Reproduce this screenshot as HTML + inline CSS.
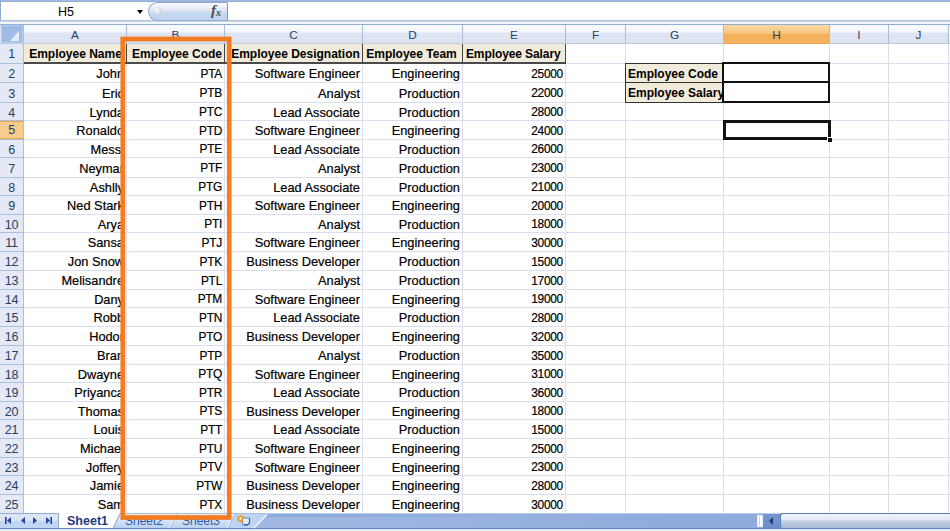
<!DOCTYPE html>
<html lang="en"><head><meta charset="utf-8"><title>Sheet1</title>
<style>
html,body{margin:0;padding:0}
body{width:950px;height:531px;overflow:hidden;background:#fff;position:relative;font-family:"Liberation Sans",sans-serif;font-size:12.5px;color:#000}
div,span{position:absolute;box-sizing:border-box;white-space:nowrap}
.hl{left:24px;width:926px;height:1px;background:#dadef0}
.vl{top:44px;width:1px;height:470px;background:#dadef0}
.ch{top:25px;height:18px;background:linear-gradient(#f8fafd 0,#f3f6fb 38%,#e0e5f3 46%,#dde2f1 100%);color:#27405e;text-align:center;line-height:21px;font-size:11.8px}
.chs{top:25px;height:19px;width:1px;background:#a9bcd9}
.rh{left:0;width:23px;background:#e5e8f5;color:#27405e;text-align:center;font-size:12.5px;letter-spacing:-0.3px}
.rhl{left:0;width:24px;height:1px;background:#a9bfdb}
.c{text-align:right;font-size:12.8px;-webkit-text-stroke:0.2px #000}
.n{font-size:11.9px;letter-spacing:-0.25px}
.b{font-weight:bold;font-size:12px;text-align:left;background:#f1ebdc}
.rsel{background:#f8cb8e;border:1px solid #f1a449;border-left:0;width:24px;line-height:17px !important}
.sel{background:linear-gradient(#f9d9a2 0,#f7c780 45%,#f3ad55 55%,#f4b566 100%)}

</style></head><body>
<div style="left:0;top:0;width:950px;height:25px;background:#fff"></div>
<div style="left:0;top:0;width:950px;height:2px;background:linear-gradient(#a9bfe0,#8eaad4)"></div>
<div style="left:0;top:0;width:1px;height:25px;background:#8eaad4"></div>
<div style="left:0;top:20px;width:950px;height:1px;background:#b3c2da"></div>
<div style="left:0;top:21px;width:950px;height:1px;background:#c9d5e8"></div>
<div style="left:0;top:22px;width:950px;height:2px;background:#f2f5fa"></div>
<div style="left:0;top:24px;width:950px;height:1px;background:#93acd5"></div>
<div style="left:1px;top:2px;width:130px;height:18px;line-height:21px;text-align:center;font-size:12.5px">H5</div>
<div style="left:136.5px;top:10px;width:0;height:0;border-left:3.5px solid transparent;border-right:3.5px solid transparent;border-top:4px solid #000"></div>
<div style="left:148px;top:2px;width:80px;height:19px;background:linear-gradient(#fbfcfe 0,#f1f4fa 18%,#dde3f3 45%,#c4d8f0 60%,#c2d3ee 100%);border:1px solid #8fa9d0;border-radius:9.5px 0 0 9.5px;border-right:1px solid #7399cf"></div>
<div style="left:154px;top:7px;width:8px;height:8px;border-radius:4px;background:radial-gradient(circle at 35% 35%,#fafafa,#b9c2d0)"></div>
<div style="left:211px;top:2px;width:16px;height:18px;line-height:17px;font-family:'Liberation Serif',serif;font-style:italic;font-weight:bold;font-size:15px;color:#4a4d52">f<span style="position:relative;font-size:10px;left:0;top:1px">x</span></div>
<div style="left:0;top:25px;width:950px;height:19px;background:#dde2f1"></div>
<div style="left:1px;top:25px;width:22px;height:18px;background:#a0bae6;border:1px solid #b7d0f0"></div>
<div style="left:10px;top:31px;width:0;height:0;border-left:9px solid transparent;border-bottom:10px solid #e6ecf7"></div>
<div class="chs" style="left:23px"></div>
<div class="ch" style="left:24px;width:102px">A</div>
<div class="chs" style="left:126px"></div>
<div class="ch" style="left:127px;width:97px">B</div>
<div class="chs" style="left:224px"></div>
<div class="ch" style="left:225px;width:137px">C</div>
<div class="chs" style="left:362px"></div>
<div class="ch" style="left:363px;width:99px">D</div>
<div class="chs" style="left:462px"></div>
<div class="ch" style="left:463px;width:102px">E</div>
<div class="chs" style="left:565px"></div>
<div class="ch" style="left:566px;width:59px">F</div>
<div class="chs" style="left:625px"></div>
<div class="ch" style="left:626px;width:97px">G</div>
<div class="chs" style="left:723px"></div>
<div class="ch sel" style="left:724px;width:105px">H</div>
<div class="chs" style="left:829px"></div>
<div class="ch" style="left:830px;width:58px">I</div>
<div class="chs" style="left:888px"></div>
<div class="ch" style="left:889px;width:59px">J</div>
<div class="chs" style="left:948px"></div>
<div style="left:949px;top:25px;width:1px;height:18px;background:#f3f6fb"></div>
<div style="left:0;top:43px;width:950px;height:1px;background:#bccae3"></div>
<div style="left:724px;top:43px;width:105px;height:1px;background:#f0a040"></div>
<div class="rh" style="top:44px;height:19px;line-height:20px">1</div>
<div class="rhl" style="top:63px"></div>
<div class="rh" style="top:64px;height:18px;line-height:21px">2</div>
<div class="rhl" style="top:82px"></div>
<div class="rh" style="top:83px;height:19px;line-height:22px">3</div>
<div class="rhl" style="top:102px"></div>
<div class="rh" style="top:103px;height:17px;line-height:20px">4</div>
<div class="rhl" style="top:120px"></div>
<div class="rh rsel" style="top:121px;height:18px;line-height:21px">5</div>
<div class="rhl" style="top:139px"></div>
<div class="rh" style="top:140px;height:17px;line-height:20px">6</div>
<div class="rhl" style="top:157px"></div>
<div class="rh" style="top:158px;height:19px;line-height:22px">7</div>
<div class="rhl" style="top:177px"></div>
<div class="rh" style="top:178px;height:17px;line-height:20px">8</div>
<div class="rhl" style="top:195px"></div>
<div class="rh" style="top:196px;height:18px;line-height:21px">9</div>
<div class="rhl" style="top:214px"></div>
<div class="rh" style="top:215px;height:17px;line-height:20px">10</div>
<div class="rhl" style="top:232px"></div>
<div class="rh" style="top:233px;height:18px;line-height:21px">11</div>
<div class="rhl" style="top:251px"></div>
<div class="rh" style="top:252px;height:18px;line-height:21px">12</div>
<div class="rhl" style="top:270px"></div>
<div class="rh" style="top:271px;height:18px;line-height:21px">13</div>
<div class="rhl" style="top:289px"></div>
<div class="rh" style="top:290px;height:17px;line-height:20px">14</div>
<div class="rhl" style="top:307px"></div>
<div class="rh" style="top:308px;height:18px;line-height:21px">15</div>
<div class="rhl" style="top:326px"></div>
<div class="rh" style="top:327px;height:18px;line-height:21px">16</div>
<div class="rhl" style="top:345px"></div>
<div class="rh" style="top:346px;height:18px;line-height:21px">17</div>
<div class="rhl" style="top:364px"></div>
<div class="rh" style="top:365px;height:17px;line-height:20px">18</div>
<div class="rhl" style="top:382px"></div>
<div class="rh" style="top:383px;height:18px;line-height:21px">19</div>
<div class="rhl" style="top:401px"></div>
<div class="rh" style="top:402px;height:17px;line-height:20px">20</div>
<div class="rhl" style="top:419px"></div>
<div class="rh" style="top:420px;height:18px;line-height:21px">21</div>
<div class="rhl" style="top:438px"></div>
<div class="rh" style="top:439px;height:18px;line-height:21px">22</div>
<div class="rhl" style="top:457px"></div>
<div class="rh" style="top:458px;height:17px;line-height:20px">23</div>
<div class="rhl" style="top:475px"></div>
<div class="rh" style="top:476px;height:18px;line-height:21px">24</div>
<div class="rhl" style="top:494px"></div>
<div class="rh" style="top:495px;height:18px;line-height:21px">25</div>
<div class="rhl" style="top:513px"></div>
<div style="left:23px;top:44px;width:1px;height:470px;background:#a9bfdb"></div>
<div class="hl" style="top:63px"></div>
<div class="hl" style="top:82px"></div>
<div class="hl" style="top:102px"></div>
<div class="hl" style="top:120px"></div>
<div class="hl" style="top:139px"></div>
<div class="hl" style="top:157px"></div>
<div class="hl" style="top:177px"></div>
<div class="hl" style="top:195px"></div>
<div class="hl" style="top:214px"></div>
<div class="hl" style="top:232px"></div>
<div class="hl" style="top:251px"></div>
<div class="hl" style="top:270px"></div>
<div class="hl" style="top:289px"></div>
<div class="hl" style="top:307px"></div>
<div class="hl" style="top:326px"></div>
<div class="hl" style="top:345px"></div>
<div class="hl" style="top:364px"></div>
<div class="hl" style="top:382px"></div>
<div class="hl" style="top:401px"></div>
<div class="hl" style="top:419px"></div>
<div class="hl" style="top:438px"></div>
<div class="hl" style="top:457px"></div>
<div class="hl" style="top:475px"></div>
<div class="hl" style="top:494px"></div>
<div class="hl" style="top:513px"></div>
<div class="vl" style="left:126px"></div>
<div class="vl" style="left:224px"></div>
<div class="vl" style="left:362px"></div>
<div class="vl" style="left:462px"></div>
<div class="vl" style="left:565px"></div>
<div class="vl" style="left:625px"></div>
<div class="vl" style="left:723px"></div>
<div class="vl" style="left:829px"></div>
<div class="vl" style="left:888px"></div>
<div class="vl" style="left:948px"></div>
<div class="b" style="left:24px;top:44px;width:103px;height:20px;line-height:21px;text-align:center;padding-left:1px;border-left:0;border-right:1px solid #444;border-bottom:2px solid #4a4a4a;overflow:hidden">Employee Name</div>
<div class="b" style="left:126px;top:44px;width:99px;height:20px;line-height:21px;text-align:center;padding-left:3px;border-left:1px solid #444;border-right:1px solid #444;border-bottom:2px solid #4a4a4a;overflow:hidden">Employee Code</div>
<div class="b" style="left:224px;top:44px;width:139px;height:20px;line-height:21px;text-align:center;padding-left:4px;border-left:1px solid #444;border-right:1px solid #444;border-bottom:2px solid #4a4a4a;overflow:hidden">Employee Designation</div>
<div class="b" style="left:362px;top:44px;width:101px;height:20px;line-height:21px;text-align:center;padding-right:2px;border-left:1px solid #444;border-right:1px solid #444;border-bottom:2px solid #4a4a4a;overflow:hidden">Employee Team</div>
<div class="b" style="left:462px;top:44px;width:104px;height:20px;line-height:21px;text-align:center;padding-right:1.5px;border-left:1px solid #444;letter-spacing:-0.1px;border-right:1px solid #444;border-bottom:2px solid #4a4a4a;overflow:hidden">Employee Salary</div>
<div class="c" style="left:-16px;top:64px;width:140px;height:18px;line-height:20px">John</div>
<div class="c n" style="left:87px;top:64px;width:135px;height:18px;line-height:20px">PTA</div>
<div class="c" style="left:185px;top:64px;width:175px;height:18px;line-height:20px">Software Engineer</div>
<div class="c" style="left:323px;top:64px;width:137px;height:18px;line-height:20px">Engineering</div>
<div class="c n" style="left:423px;top:64px;width:140px;height:18px;line-height:20px">25000</div>
<div class="c" style="left:-16px;top:83px;width:140px;height:19px;line-height:21px">Eric</div>
<div class="c n" style="left:87px;top:83px;width:135px;height:19px;line-height:21px">PTB</div>
<div class="c" style="left:185px;top:83px;width:175px;height:19px;line-height:21px">Analyst</div>
<div class="c" style="left:323px;top:83px;width:137px;height:19px;line-height:21px">Production</div>
<div class="c n" style="left:423px;top:83px;width:140px;height:19px;line-height:21px">22000</div>
<div class="c" style="left:-16px;top:103px;width:140px;height:17px;line-height:19px">Lynda</div>
<div class="c n" style="left:87px;top:103px;width:135px;height:17px;line-height:19px">PTC</div>
<div class="c" style="left:185px;top:103px;width:175px;height:17px;line-height:19px">Lead Associate</div>
<div class="c" style="left:323px;top:103px;width:137px;height:17px;line-height:19px">Production</div>
<div class="c n" style="left:423px;top:103px;width:140px;height:17px;line-height:19px">28000</div>
<div class="c" style="left:-16px;top:121px;width:140px;height:18px;line-height:20px">Ronaldo</div>
<div class="c n" style="left:87px;top:121px;width:135px;height:18px;line-height:20px">PTD</div>
<div class="c" style="left:185px;top:121px;width:175px;height:18px;line-height:20px">Software Engineer</div>
<div class="c" style="left:323px;top:121px;width:137px;height:18px;line-height:20px">Engineering</div>
<div class="c n" style="left:423px;top:121px;width:140px;height:18px;line-height:20px">24000</div>
<div class="c" style="left:-16px;top:140px;width:140px;height:17px;line-height:19px">Messi</div>
<div class="c n" style="left:87px;top:140px;width:135px;height:17px;line-height:19px">PTE</div>
<div class="c" style="left:185px;top:140px;width:175px;height:17px;line-height:19px">Lead Associate</div>
<div class="c" style="left:323px;top:140px;width:137px;height:17px;line-height:19px">Production</div>
<div class="c n" style="left:423px;top:140px;width:140px;height:17px;line-height:19px">26000</div>
<div class="c" style="left:-16px;top:158px;width:140px;height:19px;line-height:21px">Neymar</div>
<div class="c n" style="left:87px;top:158px;width:135px;height:19px;line-height:21px">PTF</div>
<div class="c" style="left:185px;top:158px;width:175px;height:19px;line-height:21px">Analyst</div>
<div class="c" style="left:323px;top:158px;width:137px;height:19px;line-height:21px">Production</div>
<div class="c n" style="left:423px;top:158px;width:140px;height:19px;line-height:21px">23000</div>
<div class="c" style="left:-16px;top:178px;width:140px;height:17px;line-height:19px">Ashlly</div>
<div class="c n" style="left:87px;top:178px;width:135px;height:17px;line-height:19px">PTG</div>
<div class="c" style="left:185px;top:178px;width:175px;height:17px;line-height:19px">Lead Associate</div>
<div class="c" style="left:323px;top:178px;width:137px;height:17px;line-height:19px">Production</div>
<div class="c n" style="left:423px;top:178px;width:140px;height:17px;line-height:19px">21000</div>
<div class="c" style="left:-16px;top:196px;width:140px;height:18px;line-height:20px">Ned Stark</div>
<div class="c n" style="left:87px;top:196px;width:135px;height:18px;line-height:20px">PTH</div>
<div class="c" style="left:185px;top:196px;width:175px;height:18px;line-height:20px">Software Engineer</div>
<div class="c" style="left:323px;top:196px;width:137px;height:18px;line-height:20px">Engineering</div>
<div class="c n" style="left:423px;top:196px;width:140px;height:18px;line-height:20px">20000</div>
<div class="c" style="left:-16px;top:215px;width:140px;height:17px;line-height:19px">Arya</div>
<div class="c n" style="left:87px;top:215px;width:135px;height:17px;line-height:19px">PTI</div>
<div class="c" style="left:185px;top:215px;width:175px;height:17px;line-height:19px">Analyst</div>
<div class="c" style="left:323px;top:215px;width:137px;height:17px;line-height:19px">Production</div>
<div class="c n" style="left:423px;top:215px;width:140px;height:17px;line-height:19px">18000</div>
<div class="c" style="left:-16px;top:233px;width:140px;height:18px;line-height:20px">Sansa</div>
<div class="c n" style="left:87px;top:233px;width:135px;height:18px;line-height:20px">PTJ</div>
<div class="c" style="left:185px;top:233px;width:175px;height:18px;line-height:20px">Software Engineer</div>
<div class="c" style="left:323px;top:233px;width:137px;height:18px;line-height:20px">Engineering</div>
<div class="c n" style="left:423px;top:233px;width:140px;height:18px;line-height:20px">30000</div>
<div class="c" style="left:-16px;top:252px;width:140px;height:18px;line-height:20px">Jon Snow</div>
<div class="c n" style="left:87px;top:252px;width:135px;height:18px;line-height:20px">PTK</div>
<div class="c" style="left:185px;top:252px;width:175px;height:18px;line-height:20px">Business Developer</div>
<div class="c" style="left:323px;top:252px;width:137px;height:18px;line-height:20px">Production</div>
<div class="c n" style="left:423px;top:252px;width:140px;height:18px;line-height:20px">15000</div>
<div class="c" style="left:-16px;top:271px;width:140px;height:18px;line-height:20px">Melisandre</div>
<div class="c n" style="left:87px;top:271px;width:135px;height:18px;line-height:20px">PTL</div>
<div class="c" style="left:185px;top:271px;width:175px;height:18px;line-height:20px">Analyst</div>
<div class="c" style="left:323px;top:271px;width:137px;height:18px;line-height:20px">Production</div>
<div class="c n" style="left:423px;top:271px;width:140px;height:18px;line-height:20px">17000</div>
<div class="c" style="left:-16px;top:290px;width:140px;height:17px;line-height:19px">Dany</div>
<div class="c n" style="left:87px;top:290px;width:135px;height:17px;line-height:19px">PTM</div>
<div class="c" style="left:185px;top:290px;width:175px;height:17px;line-height:19px">Software Engineer</div>
<div class="c" style="left:323px;top:290px;width:137px;height:17px;line-height:19px">Engineering</div>
<div class="c n" style="left:423px;top:290px;width:140px;height:17px;line-height:19px">19000</div>
<div class="c" style="left:-16px;top:308px;width:140px;height:18px;line-height:20px">Robb</div>
<div class="c n" style="left:87px;top:308px;width:135px;height:18px;line-height:20px">PTN</div>
<div class="c" style="left:185px;top:308px;width:175px;height:18px;line-height:20px">Lead Associate</div>
<div class="c" style="left:323px;top:308px;width:137px;height:18px;line-height:20px">Production</div>
<div class="c n" style="left:423px;top:308px;width:140px;height:18px;line-height:20px">28000</div>
<div class="c" style="left:-16px;top:327px;width:140px;height:18px;line-height:20px">Hodor</div>
<div class="c n" style="left:87px;top:327px;width:135px;height:18px;line-height:20px">PTO</div>
<div class="c" style="left:185px;top:327px;width:175px;height:18px;line-height:20px">Business Developer</div>
<div class="c" style="left:323px;top:327px;width:137px;height:18px;line-height:20px">Engineering</div>
<div class="c n" style="left:423px;top:327px;width:140px;height:18px;line-height:20px">32000</div>
<div class="c" style="left:-16px;top:346px;width:140px;height:18px;line-height:20px">Bran</div>
<div class="c n" style="left:87px;top:346px;width:135px;height:18px;line-height:20px">PTP</div>
<div class="c" style="left:185px;top:346px;width:175px;height:18px;line-height:20px">Analyst</div>
<div class="c" style="left:323px;top:346px;width:137px;height:18px;line-height:20px">Production</div>
<div class="c n" style="left:423px;top:346px;width:140px;height:18px;line-height:20px">35000</div>
<div class="c" style="left:-16px;top:365px;width:140px;height:17px;line-height:19px">Dwayne</div>
<div class="c n" style="left:87px;top:365px;width:135px;height:17px;line-height:19px">PTQ</div>
<div class="c" style="left:185px;top:365px;width:175px;height:17px;line-height:19px">Software Engineer</div>
<div class="c" style="left:323px;top:365px;width:137px;height:17px;line-height:19px">Engineering</div>
<div class="c n" style="left:423px;top:365px;width:140px;height:17px;line-height:19px">31000</div>
<div class="c" style="left:-16px;top:383px;width:140px;height:18px;line-height:20px">Priyanca</div>
<div class="c n" style="left:87px;top:383px;width:135px;height:18px;line-height:20px">PTR</div>
<div class="c" style="left:185px;top:383px;width:175px;height:18px;line-height:20px">Lead Associate</div>
<div class="c" style="left:323px;top:383px;width:137px;height:18px;line-height:20px">Production</div>
<div class="c n" style="left:423px;top:383px;width:140px;height:18px;line-height:20px">36000</div>
<div class="c" style="left:-16px;top:402px;width:140px;height:17px;line-height:19px">Thomas</div>
<div class="c n" style="left:87px;top:402px;width:135px;height:17px;line-height:19px">PTS</div>
<div class="c" style="left:185px;top:402px;width:175px;height:17px;line-height:19px">Business Developer</div>
<div class="c" style="left:323px;top:402px;width:137px;height:17px;line-height:19px">Engineering</div>
<div class="c n" style="left:423px;top:402px;width:140px;height:17px;line-height:19px">18000</div>
<div class="c" style="left:-16px;top:420px;width:140px;height:18px;line-height:20px">Louis</div>
<div class="c n" style="left:87px;top:420px;width:135px;height:18px;line-height:20px">PTT</div>
<div class="c" style="left:185px;top:420px;width:175px;height:18px;line-height:20px">Lead Associate</div>
<div class="c" style="left:323px;top:420px;width:137px;height:18px;line-height:20px">Production</div>
<div class="c n" style="left:423px;top:420px;width:140px;height:18px;line-height:20px">15000</div>
<div class="c" style="left:-16px;top:439px;width:140px;height:18px;line-height:20px">Michael</div>
<div class="c n" style="left:87px;top:439px;width:135px;height:18px;line-height:20px">PTU</div>
<div class="c" style="left:185px;top:439px;width:175px;height:18px;line-height:20px">Software Engineer</div>
<div class="c" style="left:323px;top:439px;width:137px;height:18px;line-height:20px">Engineering</div>
<div class="c n" style="left:423px;top:439px;width:140px;height:18px;line-height:20px">25000</div>
<div class="c" style="left:-16px;top:458px;width:140px;height:17px;line-height:19px">Joffery</div>
<div class="c n" style="left:87px;top:458px;width:135px;height:17px;line-height:19px">PTV</div>
<div class="c" style="left:185px;top:458px;width:175px;height:17px;line-height:19px">Software Engineer</div>
<div class="c" style="left:323px;top:458px;width:137px;height:17px;line-height:19px">Engineering</div>
<div class="c n" style="left:423px;top:458px;width:140px;height:17px;line-height:19px">23000</div>
<div class="c" style="left:-16px;top:476px;width:140px;height:18px;line-height:20px">Jamie</div>
<div class="c n" style="left:87px;top:476px;width:135px;height:18px;line-height:20px">PTW</div>
<div class="c" style="left:185px;top:476px;width:175px;height:18px;line-height:20px">Business Developer</div>
<div class="c" style="left:323px;top:476px;width:137px;height:18px;line-height:20px">Engineering</div>
<div class="c n" style="left:423px;top:476px;width:140px;height:18px;line-height:20px">28000</div>
<div class="c" style="left:-16px;top:495px;width:140px;height:18px;line-height:20px">Sam</div>
<div class="c n" style="left:87px;top:495px;width:135px;height:18px;line-height:20px">PTX</div>
<div class="c" style="left:185px;top:495px;width:175px;height:18px;line-height:20px">Business Developer</div>
<div class="c" style="left:323px;top:495px;width:137px;height:18px;line-height:20px">Engineering</div>
<div class="c n" style="left:423px;top:495px;width:140px;height:18px;line-height:20px">30000</div>
<div class="b" style="left:625px;top:63px;width:99px;height:20px;line-height:20px;padding-left:2px;border:1px solid #333;overflow:hidden">Employee Code</div>
<div style="left:722px;top:62px;width:108px;height:21px;border:2px solid #111"></div>
<div class="b" style="left:625px;top:82px;width:99px;height:21px;line-height:21px;padding-left:2px;border:1px solid #333;overflow:hidden">Employee Salary</div>
<div style="left:722px;top:81px;width:108px;height:22px;border:2px solid #111"></div>
<div style="left:723px;top:120px;width:108px;height:20px;border:3px solid #111"></div>
<div style="left:827px;top:137px;width:5px;height:5px;background:#111;border:1px solid #fff;border-right:0;border-bottom:0"></div>
<div style="left:0;top:513px;width:950px;height:1px;background:#b9cbea"></div>
<div style="left:0;top:514px;width:950px;height:14px;background:linear-gradient(to right,#a2b8e2 270px,#8eabdc 700px)"></div>
<div style="left:0;top:514px;width:600px;height:3px;background:linear-gradient(to right,#8aabdd 300px,rgba(140,171,221,0) 600px)"></div>
<div style="left:0;top:528px;width:950px;height:1px;background:#5f84c4"></div>
<div style="left:0;top:529px;width:950px;height:2px;background:#e6e9f5"></div>
<div style="left:0;top:513px;width:59px;height:15px;background:linear-gradient(#dfe5f4 0,#dce3f3 45%,#bed4f1 55%,#c2d6f1 100%);border-right:1px solid #8ea8cf;border-top:1px solid #97aed4"></div>
<svg style="position:absolute;left:0;top:514px" width="58" height="13" viewBox="0 0 58 13"><g fill="#2247a0"><rect x="5" y="3" width="1.6" height="7"/><path d="M11 3v7l-4-3.5z"/><path d="M25 3v7l-4-3.5z"/><path d="M33 3v7l4-3.5z"/><path d="M46 3v7l4-3.5z"/><rect x="50.4" y="3" width="1.6" height="7"/></g></svg>
<svg style="position:absolute;left:0;top:513px" width="300" height="16" viewBox="0 513 300 16"><defs><linearGradient id="tg" x1="0" y1="0" x2="0" y2="1"><stop offset="0" stop-color="#e9eff9"/><stop offset=".5" stop-color="#d6e3f5"/><stop offset="1" stop-color="#b9d0ef"/></linearGradient></defs><path d="M59 513H120L113 528H59z" fill="#fff"/><path d="M120 514H234L227 528H113z" fill="url(#tg)"/><path d="M234 514H267L254 528H227z" fill="#bcd5f4"/><path d="M120 513.5H267" stroke="#a9bede" stroke-width="1" fill="none"/><path d="M113 528L120 514" stroke="#8ea6d2" stroke-width="1" fill="none"/><path d="M169 528L176 514M227 528L234 514M254 528L267 514.5" stroke="#f7fafe" stroke-width="1.2" fill="none"/><path d="M170 528L177 514M228 528L235 514" stroke="#9db4da" stroke-width=".8" fill="none"/></svg>
<div style="left:67px;top:514px;height:14px;line-height:14px;font-weight:bold;font-size:12.5px;color:#1f3a7d">Sheet1</div>
<div style="left:125px;top:515px;height:13px;line-height:13px;font-size:12px;color:#2f55a5">Sheet2</div>
<div style="left:182px;top:515px;height:13px;line-height:13px;font-size:12px;color:#2f55a5">Sheet3</div>
<svg style="position:absolute;left:236px;top:514px" width="18" height="14" viewBox="0 0.6 18 14"><path d="M6.5 4.5H13.5V9.5L11.5 11.5H6.5z" fill="#e4eaf5" stroke="#6a82b0" stroke-width="1"/><path d="M13.5 5V9.5L11.5 11.5H8" fill="none" stroke="#3c5894" stroke-width="1.2"/><path d="M4.5 0.8L5.4 3 7.6 2 6.7 4.3 8.8 5.2 6.7 6.1 7.6 8.4 5.4 7.4 4.5 9.6 3.6 7.4 1.4 8.4 2.3 6.1 0.2 5.2 2.3 4.3 1.4 2 3.6 3z" fill="#e8962e"/><circle cx="4.5" cy="5.2" r="1.3" fill="#fff3d6"/></svg>
<div style="left:757px;top:515px;width:6px;height:12px;background:linear-gradient(to right,#fff 0,#fff 30%,#9aa7bd 45%,#fff 60%);border:1px solid #e9eef7"></div>
<div style="left:763px;top:514px;width:17px;height:14px;background:linear-gradient(#7696cf,#6a8cc8)"></div>
<div style="left:769px;top:517px;width:0;height:0;border-top:4px solid transparent;border-bottom:4px solid transparent;border-right:4.5px solid #253a6a"></div>
<div style="left:780px;top:513px;width:170px;height:15px;background:linear-gradient(#f1f3f9 0,#e4e8f2 40%,#bccbdf 55%,#a9bbd5 100%);border:1px solid #5c7cba;border-right:0;border-bottom:0;border-radius:3px 0 0 3px"></div>
<svg style="position:absolute;left:0;top:0" width="950" height="531" viewBox="0 0 950 531"><rect x="122.8" y="39" width="106.4" height="478.5" fill="none" stroke="#f47b20" stroke-width="4.7"/></svg>
</body></html>
